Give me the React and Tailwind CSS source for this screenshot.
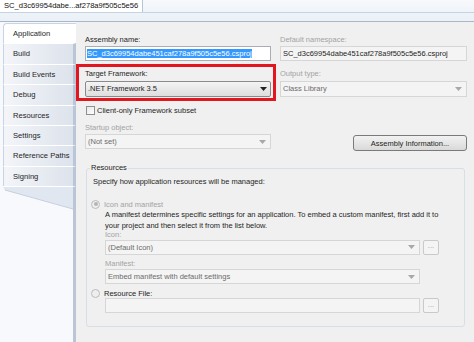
import React from "react"

function Arrow({ color = "#222" }) {
  return (
    <svg width="7" height="4" viewBox="0 0 7 4" className="shrink-0">
      <path d="M0 0 H7 L3.5 4 Z" fill={color} />
    </svg>
  )
}

function DisabledSelect({ text, className }) {
  return (
    <div className={`h-[15px] flex items-center justify-between pl-[2px] pr-[4px] bg-[#f4f4f4] border border-[#d6d6d6] text-[#6b6b6b] ${className}`}>
      <span>{text}</span>
      <Arrow color="#a8a8a8" />
    </div>
  )
}

function DotsButton() {
  return (
    <div className="w-[16px] h-[15px] flex items-center justify-center border border-[#c9c9c9] rounded-[2px] bg-[#f4f4f4] text-[#a0a0a0] leading-none pb-[3px]">...</div>
  )
}

function Radio({ checked }) {
  return (
    <div className="w-[9px] h-[9px] rounded-full border border-[#bcbcbc] bg-[#eeeeee] flex items-center justify-center">
      {checked && <div className="w-[4px] h-[4px] rounded-full bg-[#b5b5b5]" />}
    </div>
  )
}

const tabs = ["Application", "Build", "Build Events", "Debug", "Resources", "Settings", "Reference Paths", "Signing"]

export default function App() {
  return (
    <div className="w-[474px] h-[342px] overflow-hidden bg-[#f0f0f0] text-[7.5px] text-[#1e1e1e] flex flex-col" style={{ fontFamily: "'Liberation Sans', Arial, sans-serif" }}>
      {/* document tab strip */}
      <div className="h-[22px] shrink-0 flex flex-col bg-gradient-to-b from-[#f7f9fc] to-[#eaf0f6] border-b border-[#a9b7c9]">
        <div className="h-[13px] flex border-b border-[#c3d3e6]">
          <div className="w-[143px] bg-white border-r border-[#b7c5d8] pl-[4px] flex items-center text-[7.6px] text-[#111] whitespace-nowrap">
            SC_d3c69954dabe...af278a9f505c5e56
          </div>
        </div>
      </div>

      <div className="flex flex-1">
        {/* side tabs */}
        <div className="w-[76px] shrink-0 flex flex-col bg-[#f7f9fc] pl-[3px] pt-[1px]">
          {tabs.map((t, i) => (
            <div
              key={t}
              className={
                i === 0
                  ? "h-[20.4px] flex items-center pl-[9px] bg-white border-l border-t border-[#c9d4e3] rounded-tl-[4px] text-[7.6px]"
                  : "h-[20.4px] flex items-center pl-[9px] border-l border-[#c9d4e3] border-t border-t-white border-r-[3px] border-r-[#bac6d8] bg-gradient-to-r from-[#f3f5f9] to-[#dde3ec] text-[7.6px] whitespace-nowrap"
              }
            >
              {t}
            </div>
          ))}
          <div className="flex-1 border-r-[3px] border-[#bac6d8] border-t border-t-white">
            <svg width="70" height="30" viewBox="0 0 70 30" className="block">
              <polygon points="0,0 70,0 70,22 2,3" fill="#e1e7f0" />
              <line x1="2" y1="3" x2="70" y2="22" stroke="#c6d0de" strokeWidth="1" />
            </svg>
          </div>
        </div>

        {/* main panel */}
        <div className="flex-1 pl-[9px] pt-[13px]">
          <div className="flex gap-[9px]">
            <div className="w-[186px]">
              <div className="h-[10px] leading-[10px]">Assembly name:</div>
              <div className="mt-[1px] h-[15px] bg-white border border-[#abadb3] flex items-center pl-[1px]">
                <span className="bg-[#3399ff] text-white leading-[9px]">SC_d3c69954dabe451caf278a9f505c5e56.csproj</span>
              </div>
            </div>
            <div className="w-[187px]">
              <div className="h-[10px] leading-[10px] text-[#a3a3a3]">Default namespace:</div>
              <div className="mt-[1px] h-[15px] bg-[#f4f4f4] border border-[#d6d6d6] flex items-center pl-[2px]">
                SC_d3c69954dabe451caf278a9f505c5e56.csproj
              </div>
            </div>
          </div>

          <div className="flex gap-[9px]">
            <div className="w-[186px]">
              <div className="-ml-[9px] -mr-[5px] mt-[3px] border-[3px] border-[#e2161f] pl-[6px] pr-[2px] pt-[2px] pb-[1px]">
                <div className="h-[10px] leading-[10px]">Target Framework:</div>
                <div className="mt-[2px] h-[16px] flex items-center justify-between pl-[2px] pr-[3px] border border-[#8a8a8a] rounded-[2px] bg-gradient-to-b from-[#f4f4f4] to-[#dedede]">
                  <span>.NET Framework 3.5</span>
                  <Arrow />
                </div>
              </div>
            </div>
            <div className="w-[187px] mt-[8px]">
              <div className="h-[10px] leading-[10px] text-[#a3a3a3]">Output type:</div>
              <DisabledSelect text="Class Library" className="mt-[2px] h-[16px]" />
            </div>
          </div>

          <div className="mt-[4px] flex items-center gap-[2px] pl-[1px]">
            <div className="w-[9px] h-[9px] border border-[#8e8f8f] bg-gradient-to-br from-[#e8e8e8] to-white" />
            <span>Client-only Framework subset</span>
          </div>

          <div className="flex gap-[9px] mt-[7px]">
            <div className="w-[186px]">
              <div className="h-[10px] leading-[10px] text-[#a3a3a3]">Startup object:</div>
              <DisabledSelect text="(Not set)" className="mt-[1px]" />
            </div>
            <div className="w-[187px] flex justify-end">
              <div className="mt-[12px] w-[114px] h-[16px] flex items-center justify-center border border-[#7a7a7a] rounded-[3px] bg-gradient-to-b from-[#f2f2f2] to-[#d9d9d9]">
                Assembly Information...
              </div>
            </div>
          </div>

          <fieldset className="mt-[12px] ml-[1px] w-[379px] border border-[#d5dfe5] rounded-[3px] pl-[4px] pb-[13px]">
            <legend className="h-[10px] leading-[10px] px-[1px] -ml-[1px]">Resources</legend>
            <div className="mt-[4px] ml-[2px] h-[10px] leading-[10px]">Specify how application resources will be managed:</div>

            <div className="mt-[12px] h-[10px] flex items-center gap-[4px]">
              <Radio checked />
              <span className="text-[#a3a3a3]">Icon and manifest</span>
            </div>
            <div className="pl-[14px]">
              <div className="leading-[11px] whitespace-nowrap">
                A manifest determines specific settings for an application. To embed a custom manifest, first add it to
                <br />
                your project and then select it from the list below.
              </div>
              <div className="h-[9px] leading-[9px] text-[#a3a3a3] mt-[-1.5px]">Icon:</div>
              <div className="mt-[1px] flex gap-[3px]">
                <DisabledSelect text="(Default Icon)" className="w-[315px] h-[14px]" />
                <DotsButton />
              </div>
              <div className="mt-[4px] h-[9px] leading-[9px] text-[#a3a3a3]">Manifest:</div>
              <DisabledSelect text="Embed manifest with default settings" className="mt-[1.5px] w-[315px] h-[14px]" />
            </div>

            <div className="mt-[4px] h-[10px] flex items-center gap-[4px]">
              <Radio />
              <span>Resource File:</span>
            </div>
            <div className="pl-[14px] flex gap-[3px]">
              <div className="w-[315px] h-[15px] bg-[#f4f4f4] border border-[#d6d6d6]" />
              <DotsButton />
            </div>
          </fieldset>
        </div>
      </div>
    </div>
  )
}
